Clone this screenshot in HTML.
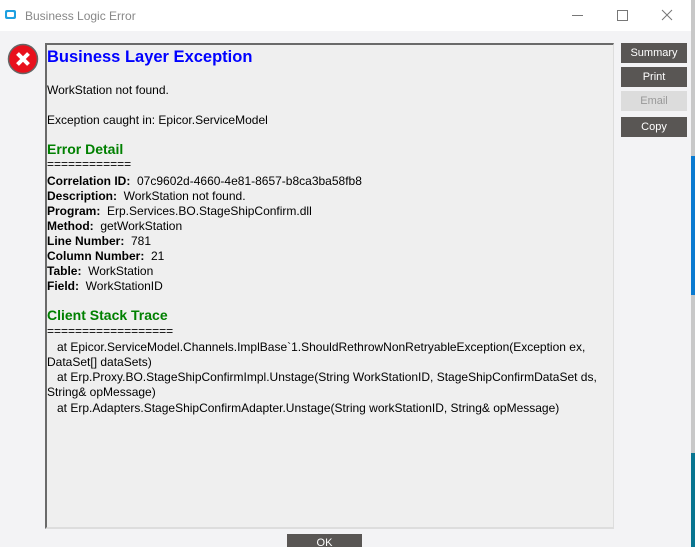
<!DOCTYPE html>
<html style="overflow:hidden"><head><style>
html,body{overflow:hidden;}
body{margin:0;width:695px;height:547px;background:#f3f3f5;position:relative;font-family:"Liberation Sans",Arial,sans-serif;}
.tb{position:absolute;left:0;top:0;width:691px;height:31px;background:#fff;}
.tt{position:absolute;left:25px;top:9px;font-size:12px;color:#888;}
.box{position:absolute;left:45px;top:43px;width:566px;height:482px;background:#efefef;border-left:2px solid #6a6a6a;border-top:2px solid #6a6a6a;border-right:1px solid #ddd;border-bottom:2px solid #ddd;}
.l{position:absolute;left:0px;font-size:12px;color:#000;white-space:nowrap;}
.btn{position:absolute;left:621px;width:66px;height:20px;background:#595654;color:#fff;font-size:11px;text-align:center;line-height:20px;}
.strip{position:absolute;left:691px;width:4px;}
</style></head><body>
<div class="tb">
<div style="position:absolute;left:5px;top:10px;width:11px;height:9px;background:#1ea0e0;border-radius:2px"><div style="position:absolute;left:2px;top:2px;width:7px;height:5px;background:#fff;border-radius:1px"></div></div>
<div class="tt">Business Logic Error</div>
<div style="position:absolute;left:572px;top:15px;width:11px;height:1px;background:#777"></div>
<div style="position:absolute;left:617px;top:10px;width:9px;height:9px;border:1px solid #777"></div>
<svg style="position:absolute;left:661px;top:9px" width="12" height="12"><path d="M1 1L11 11M11 1L1 11" stroke="#777" stroke-width="1"/></svg>
</div>
<div class="strip" style="top:0;height:547px;background:#c8c8c8"></div>
<div class="strip" style="top:156px;height:139px;background:#0a7ad0"></div>
<div class="strip" style="top:453px;height:94px;background:#087590"></div>
<svg style="position:absolute;left:7px;top:43px" width="32" height="32"><circle cx="16" cy="16" r="14.5" fill="#e8101c" stroke="#666" stroke-width="1.5"/><path d="M10.5 10.5L21.5 21.5M21.5 10.5L10.5 21.5" stroke="#fff" stroke-width="4"/></svg>
<div class="box">
<div class="l" style="top:3px;font-size:16.5px;font-weight:bold;color:#0000ff">Business Layer Exception</div>
<div class="l" style="top:38px">WorkStation not found.</div>
<div class="l" style="top:68px">Exception caught in: Epicor.ServiceModel</div>
<div class="l" style="top:96px;font-size:14px;font-weight:bold;color:#008000">Error Detail</div>
<div class="l" style="top:112px">============</div>
<div class="l" style="top:129px"><b>Correlation ID:</b>&nbsp; 07c9602d-4660-4e81-8657-b8ca3ba58fb8</div>
<div class="l" style="top:144px"><b>Description:</b>&nbsp; WorkStation not found.</div>
<div class="l" style="top:159px"><b>Program:</b>&nbsp; Erp.Services.BO.StageShipConfirm.dll</div>
<div class="l" style="top:174px"><b>Method:</b>&nbsp; getWorkStation</div>
<div class="l" style="top:189px"><b>Line Number:</b>&nbsp; 781</div>
<div class="l" style="top:204px"><b>Column Number:</b>&nbsp; 21</div>
<div class="l" style="top:219px"><b>Table:</b>&nbsp; WorkStation</div>
<div class="l" style="top:234px"><b>Field:</b>&nbsp; WorkStationID</div>
<div class="l" style="top:262px;font-size:14px;font-weight:bold;color:#008000">Client Stack Trace</div>
<div class="l" style="top:279px">==================</div>
<div class="l" style="top:295px">&nbsp;&nbsp; at Epicor.ServiceModel.Channels.ImplBase`1.ShouldRethrowNonRetryableException(Exception ex,</div>
<div class="l" style="top:310px">DataSet[] dataSets)</div>
<div class="l" style="top:325px">&nbsp;&nbsp; at Erp.Proxy.BO.StageShipConfirmImpl.Unstage(String WorkStationID, StageShipConfirmDataSet ds,</div>
<div class="l" style="top:340px">String&amp; opMessage)</div>
<div class="l" style="top:356px">&nbsp;&nbsp; at Erp.Adapters.StageShipConfirmAdapter.Unstage(String workStationID, String&amp; opMessage)</div>
</div>
<div class="btn" style="top:43px">Summary</div>
<div class="btn" style="top:67px">Print</div>
<div class="btn" style="top:91px;background:#dcdcdc;color:#999">Email</div>
<div class="btn" style="top:117px">Copy</div>
<div style="position:absolute;left:287px;top:534px;width:75px;height:13px;overflow:hidden;background:#595654;color:#fff;font-size:11px;text-align:center;line-height:18px">OK</div>
</body></html>
